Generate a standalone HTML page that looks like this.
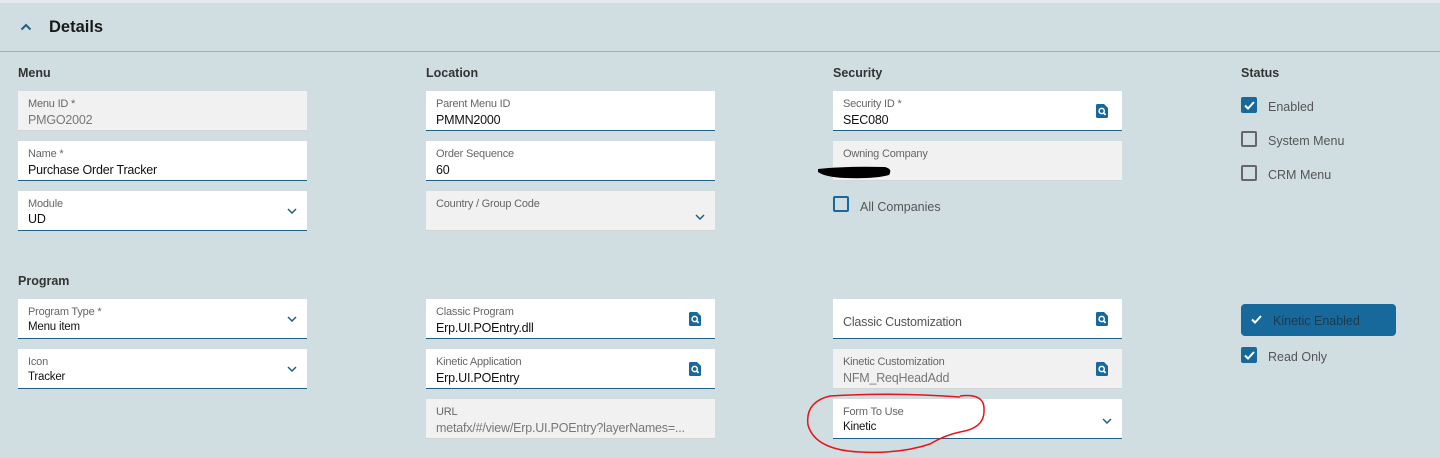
<!DOCTYPE html>
<html><head><meta charset="utf-8"><style>
*{box-sizing:border-box;margin:0;padding:0}
body{width:1440px;height:458px;background:#d0dee2;font-family:"Liberation Sans",sans-serif;position:relative;overflow:hidden;color:#222}
.top{position:absolute;left:0;top:0;width:1440px;height:3px;background:#e4ebee}
.hdr{position:absolute;left:0;top:3px;width:1440px;height:49px;border-bottom:1px solid #97b3c0}
.hdr .t{position:absolute;left:49px;top:15px;font-size:16.5px;font-weight:bold;color:#1a1a1a}
.sec{position:absolute;font-size:12.5px;font-weight:bold;color:#333}
.f{position:absolute;width:289px;height:40px;background:#fff;border-bottom:1px solid #1f5f86}
.f.ro{background:#f1f1f1;border-bottom:1px solid #d4d4d4}
.f .l{position:absolute;left:10px;top:7px;font-size:11px;color:#666;letter-spacing:-.2px}
.f .v{position:absolute;left:10px;top:22px;font-size:12.5px;color:#111;letter-spacing:-.2px}
.f.ro .v{color:#777}
.f .s{position:absolute;right:14px;top:13px}
.f .c{position:absolute;right:10px;top:17px}
.cb{position:absolute;width:16px;height:16px;border:2px solid #666;border-radius:2px;background:transparent}
.cb.on{background:#16699a;border-color:#16699a}
.cl{position:absolute;font-size:12.5px;color:#555}
</style></head><body>
<div class="top"></div>
<div class="hdr"><svg style="position:absolute;left:20px;top:20px" width="12" height="8" viewBox="0 0 12 8"><path d="M1.5 6.5L6 2l4.5 4.5" stroke="#1f5f86" stroke-width="2" fill="none"/></svg><div class="t">Details</div></div>

<div class="sec" style="left:18px;top:66px">Menu</div>
<div class="sec" style="left:426px;top:66px">Location</div>
<div class="sec" style="left:833px;top:66px">Security</div>
<div class="sec" style="left:1241px;top:66px">Status</div>
<div class="sec" style="left:18px;top:274px">Program</div>

<svg width="0" height="0" style="position:absolute"><defs>
<symbol id="srch" viewBox="0 0 12 14"><path d="M0 1.5Q0 0 1.5 0H8l4 4v8.5Q12 14 10.5 14H1.5Q0 14 0 12.5Z" fill="#16699a"/><circle cx="5.7" cy="7" r="2.6" stroke="#fff" stroke-width="1.5" fill="none"/><path d="M7.6 8.9L9.6 10.9" stroke="#fff" stroke-width="1.7"/></symbol>
<symbol id="chev" viewBox="0 0 10 6"><path d="M1 1l4 4 4-4" stroke="#1f5f86" stroke-width="1.5" fill="none"/></symbol>
</defs></svg>

<div class="f ro" style="left:18px;top:91px"><div class="l">Menu ID *</div><div class="v">PMGO2002</div></div>
<div class="f" style="left:18px;top:141px"><div class="l">Name *</div><div class="v">Purchase Order Tracker</div></div>
<div class="f" style="left:18px;top:191px"><div class="l">Module</div><div class="v" style="top:21px">UD</div><svg class="c" width="10" height="6"><use href="#chev"/></svg></div>

<div class="f" style="left:426px;top:91px"><div class="l">Parent Menu ID</div><div class="v">PMMN2000</div></div>
<div class="f" style="left:426px;top:141px"><div class="l">Order Sequence</div><div class="v">60</div></div>
<div class="f ro" style="left:426px;top:191px"><div class="l">Country / Group Code</div><svg class="c" style="top:23px" width="10" height="6"><use href="#chev"/></svg></div>

<div class="f" style="left:833px;top:91px"><div class="l">Security ID *</div><div class="v">SEC080</div><svg class="s" width="12" height="14"><use href="#srch"/></svg></div>
<div class="f ro" style="left:833px;top:141px"><div class="l">Owning Company</div></div>
<svg style="position:absolute;left:815px;top:163px" width="80" height="20"><path d="M3 6Q30 3 70 4Q78 6 74 12Q60 16 30 15Q10 14 3 9Z" fill="#000"/></svg>
<div class="cb" style="left:833px;top:196px;border-color:#16699a"></div><div class="cl" style="left:860px;top:200px">All Companies</div>

<div class="cb on" style="left:1241px;top:97px"></div><svg style="position:absolute;left:1244px;top:101px" width="11" height="9"><path d="M1 4.5l3 3L10 1" stroke="#fff" stroke-width="2" fill="none"/></svg><div class="cl" style="left:1268px;top:100px">Enabled</div>
<div class="cb" style="left:1241px;top:131px"></div><div class="cl" style="left:1268px;top:134px">System Menu</div>
<div class="cb" style="left:1241px;top:165px"></div><div class="cl" style="left:1268px;top:168px">CRM Menu</div>

<div class="f" style="left:18px;top:299px"><div class="l">Program Type *</div><div class="v" style="font-size:11.5px">Menu item</div><svg class="c" width="10" height="6"><use href="#chev"/></svg></div>
<div class="f" style="left:18px;top:349px"><div class="l">Icon</div><div class="v" style="font-size:11.5px">Tracker</div><svg class="c" width="10" height="6"><use href="#chev"/></svg></div>

<div class="f" style="left:426px;top:299px"><div class="l">Classic Program</div><div class="v">Erp.UI.POEntry.dll</div><svg class="s" width="12" height="14"><use href="#srch"/></svg></div>
<div class="f" style="left:426px;top:349px"><div class="l">Kinetic Application</div><div class="v">Erp.UI.POEntry</div><svg class="s" width="12" height="14"><use href="#srch"/></svg></div>
<div class="f ro" style="left:426px;top:399px"><div class="l">URL</div><div class="v">metafx/#/view/Erp.UI.POEntry?layerNames=...</div></div>

<div class="f" style="left:833px;top:299px"><div class="v" style="top:16px;color:#555">Classic Customization</div><svg class="s" width="12" height="14"><use href="#srch"/></svg></div>
<div class="f ro" style="left:833px;top:349px"><div class="l">Kinetic Customization</div><div class="v">NFM_ReqHeadAdd</div><svg class="s" width="12" height="14"><use href="#srch"/></svg></div>
<div class="f" style="left:833px;top:399px"><div class="l">Form To Use</div><div class="v" style="font-size:11.5px">Kinetic</div><svg class="c" style="top:19px" width="10" height="6"><use href="#chev"/></svg></div>
<svg style="position:absolute;left:800px;top:390px" width="200" height="68"><path d="M160 7Q90 2 30 6Q5 12 8 35Q15 60 60 62Q100 64 130 54Q145 45 160 42Q185 38 184 20Q185 3 160 6" stroke="#e8141a" stroke-width="1.5" fill="none"/></svg>

<div style="position:absolute;left:1241px;top:304px;width:155px;height:32px;background:#16699a;border-radius:4px"></div>
<svg style="position:absolute;left:1251px;top:315px" width="11" height="9"><path d="M1 4.5l3 3L10 1" stroke="#fff" stroke-width="2" fill="none"/></svg>
<div class="cl" style="left:1273px;top:314px;color:#1d3a4d">Kinetic Enabled</div>
<div class="cb on" style="left:1241px;top:347px"></div><svg style="position:absolute;left:1244px;top:351px" width="11" height="9"><path d="M1 4.5l3 3L10 1" stroke="#fff" stroke-width="2" fill="none"/></svg><div class="cl" style="left:1268px;top:350px">Read Only</div>
</body></html>
